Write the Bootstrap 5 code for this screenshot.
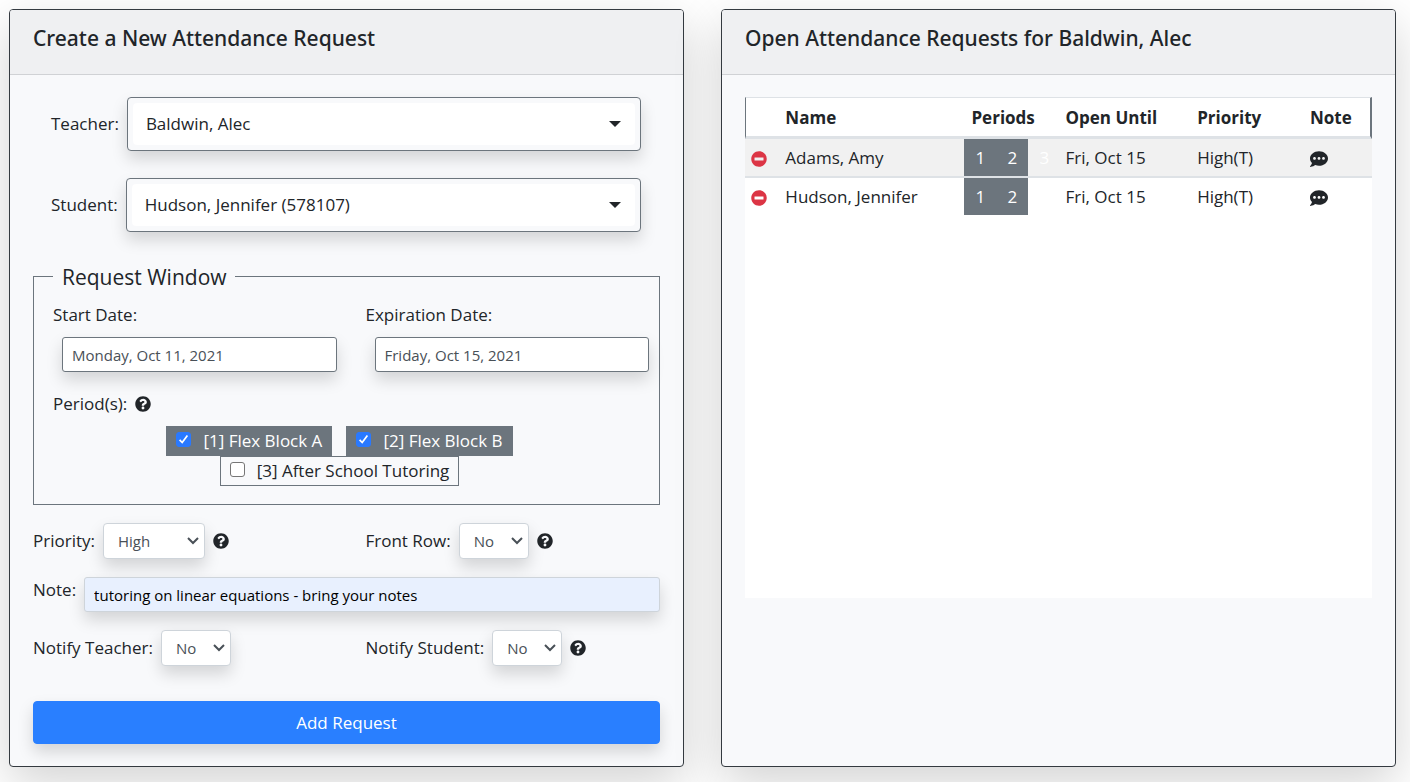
<!DOCTYPE html>
<html lang="en">
<head>
<meta charset="utf-8">
<meta name="viewport" content="width=device-width, initial-scale=1">
<title>Attendance Requests</title>
<link href="https://cdn.jsdelivr.net/npm/bootstrap@5.3.0/dist/css/bootstrap.min.css" rel="stylesheet">
<style>
  body { font-family: "Open Sans", "Noto Sans", sans-serif; font-size: 17px; line-height: 26px; color: #212529; background: #fff; }
  .page { display: grid; grid-template-columns: 1fr 1fr; gap: 37px; padding: 9px 14px 15px 9px; }
  .panel { --bs-card-bg: #f8f9fb; --bs-card-border-color: #343a40; --bs-card-border-radius: 4px; --bs-card-inner-border-radius: 3px; box-shadow: 0 16px 48px rgba(0,0,0,.175); }
  .panel > .card-header { padding: 12px 23px 20px; border-bottom: 1px solid #d0d2d5; background: #eff0f2; }
  .panel > .card-header h1 { font-family: "Noto Sans", "Open Sans", sans-serif; font-size: 21px; line-height: 32px; font-weight: 500; margin: 0; }
  .panel > .card-body { padding: 22px 23px; }
  .row { --bs-gutter-x: 38px; }
  .lift { box-shadow: 0 8px 16px rgba(0,0,0,.15); }
  .field { display: flex; align-items: center; gap: 8px; }
  .person { padding: 0 19px 0 18px; margin-bottom: 27px; }
  .picker { border: 1px solid #6c757d; border-radius: 4px; padding: 5px; background: #f8f9fb; }
  .picker select { width: 100%; height: 42px; border: 0; border-radius: 4px; padding: 0 13px; appearance: none; color: #212529;
    background: #fff url("data:image/svg+xml,%3Csvg xmlns='http://www.w3.org/2000/svg' width='12' height='6'%3E%3Cpath d='M0 0h12l-6 6z' fill='%23212529'/%3E%3C/svg%3E") no-repeat right 14px center; }
  .window { border: 1px solid #6c757d; margin: 0 0 18px; padding: 0 0 18px; }
  .window legend { float: none; width: auto; margin: 0 0 9px 19px; padding: 2px 8px 0 9px; font-size: 21px; line-height: 32px; }
  .window .row { --bs-gutter-x: 0; margin-bottom: 19px; }
  .window .row > div { padding: 0 10px 0 19px; }
  .window .row label { margin-bottom: 9px; }
  .periods { padding: 0 19px; }
  .periods .field { margin-bottom: 9px; }
  .textbox { display: block; height: 35px; border: 1px solid #6c757d; border-radius: 3px; padding: 0 9px; font-size: 15px; color: #495057; background: #fff; min-width: 0; }
  .window .textbox { margin-left: 9px; }
  .textbox.filled { border-color: #ced4da; background: #e8f0fe; color: #000; }
  .period { display: flex; align-items: center; gap: 12px; height: 30px; margin-right: 14px; padding: 0 9px; border: 1px solid #6c757d; }
  .period.on { background: #6c757d; color: #fff; }
  .period .form-check-input { width: 15px; height: 15px; margin: 0 0 4px; border: 1px solid #767676; border-radius: 3px; }
  .period .form-check-input:checked { background-color: #2979ff; border-color: #2979ff;
    background-image: url("data:image/svg+xml,%3Csvg xmlns='http://www.w3.org/2000/svg' viewBox='0 0 15 15'%3E%3Cpath d='M3 8l3 3 6-8' fill='none' stroke='%23fff' stroke-width='2'/%3E%3C/svg%3E"); }
  .choice { height: 36px; border: 1px solid #ced4da; border-radius: 4px; padding: 0 14px; font-size: 15px; color: #495057; appearance: none; width: 70px;
    background: #fff url("data:image/svg+xml,%3Csvg xmlns='http://www.w3.org/2000/svg' width='12' height='8'%3E%3Cpath d='M1 1l5 5 5-5' fill='none' stroke='%23495057' stroke-width='2'/%3E%3C/svg%3E") no-repeat right 5px center; }
  .choice.wide { width: 102px; }
  .memo { margin: 18px 0; }
  .glyph { border: 0; background: none; padding: 0; line-height: 0; color: #212529; }
  .glyph svg { display: block; fill: currentColor; }
  .glyph.remove { color: #dc3545; }
  .submit { --bs-btn-bg: #297fff; --bs-btn-border-color: #297fff; --bs-btn-border-radius: 4px; height: 43px; margin-top: 35px; padding: 0; font-size: 17px; }
  .listing { height: 501px; background: #fff; overflow: auto; }
  .requests { table-layout: fixed; width: 100%; margin: 0; border-collapse: separate; border-spacing: 0; }
  .requests th { height: 42px; padding: 2px 0 0 7px; border-top: 1px solid #dee2e6; border-bottom: 3px solid #dee2e6; line-height: 36px; }
  .requests th:first-child { border-left: 1px solid #6c757d; }
  .requests th:last-child { border-right: 2px solid #6c757d; }
  .requests td { height: 37px; padding: 0 0 0 7px; line-height: 37px; }
  .requests td:first-child { padding-left: 6px; }
  .requests th:nth-child(2), .requests td:nth-child(2) { padding-left: 9px; }
  .requests .glyph { vertical-align: middle; }
  .requests tbody tr:first-child td { background: #f1f1f1; border-bottom: 2px solid #dee2e6; }
  .requests td.slots { padding: 0; }
  .slot { flex: 0 0 32px; text-align: center; color: #fff; }
  .slot.on { background: #6c757d; }
</style>
</head>
<body>
<svg class="d-none" aria-hidden="true">
  <symbol id="help" viewBox="0 0 512 512"><path d="M504 256c0 136.997-111.043 248-248 248S8 392.997 8 256C8 119.083 119.043 8 256 8s248 111.083 248 248zM262.655 90c-54.497 0-89.255 22.957-116.549 63.758-3.536 5.286-2.353 12.415 2.715 16.258l34.699 26.31c5.205 3.947 12.621 3.008 16.665-2.122 17.864-22.658 30.113-35.797 57.303-35.797 20.429 0 45.698 13.148 45.698 32.958 0 14.976-12.363 22.667-32.534 33.976C247.128 238.528 216 254.941 216 296v4c0 6.627 5.373 12 12 12h56c6.627 0 12-5.373 12-12v-1.333c0-28.462 83.186-29.647 83.186-106.667 0-58.002-60.165-102-116.531-102zM256 338c-25.365 0-46 20.635-46 46 0 25.364 20.635 46 46 46s46-20.636 46-46c0-25.364-20.635-46-46-46z"/></symbol>
  <symbol id="minus" viewBox="0 0 512 512"><path d="M256 8C119 8 8 119 8 256s111 248 248 248 248-111 248-248S393 8 256 8zM124 304c-6.600 0-12-5.400-12-12v-72c0-6.600 5.400-12 12-12h264c6.600 0 12 5.400 12 12v72c0 6.600-5.400 12-12 12H124z"/></symbol>
  <symbol id="talk" viewBox="0 0 512 512"><path d="M256 32C114.600 32 0 125.100 0 240c0 49.600 21.400 95 57 130.700C44.500 421.100 2.700 466 2.200 466.500c-2.200 2.300-2.800 5.700-1.500 8.700S4.800 480 8 480c66.300 0 116-31.800 140.600-51.400 32.700 12.300 69 19.400 107.400 19.400 141.400 0 256-93.100 256-208S397.400 32 256 32zM128 280c-22 0-40-18-40-40s18-40 40-40 40 18 40 40-18 40-40 40zm128 0c-22 0-40-18-40-40s18-40 40-40 40 18 40 40-18 40-40 40zm128 0c-22 0-40-18-40-40s18-40 40-40 40 18 40 40-18 40-40 40z"/></symbol>
</svg>
<main class="page">
  <section class="card panel">
    <div class="card-header"><h1>Create a New Attendance Request</h1></div>
    <form class="card-body">
      <div class="field person">
        <label for="teacher">Teacher:</label>
        <div class="picker lift flex-grow-1"><select id="teacher"><option>Baldwin, Alec</option></select></div>
      </div>
      <div class="field person">
        <label for="student">Student:</label>
        <div class="picker lift flex-grow-1"><select id="student"><option>Hudson, Jennifer (578107)</option></select></div>
      </div>

      <fieldset class="window">
        <legend>Request Window</legend>
        <div class="row">
          <div class="col-6 d-flex flex-column">
            <label for="start">Start Date:</label>
            <input id="start" class="textbox lift" type="text" value="Monday, Oct 11, 2021">
          </div>
          <div class="col-6 d-flex flex-column">
            <label for="end">Expiration Date:</label>
            <input id="end" class="textbox lift" type="text" value="Friday, Oct 15, 2021">
          </div>
        </div>
        <div class="periods">
          <div class="field"><span>Period(s):</span><button type="button" class="glyph" aria-label="Help with periods"><svg width="16" height="16"><use href="#help"/></svg></button></div>
          <div class="d-flex flex-wrap justify-content-center">
            <label class="period on"><input class="form-check-input" type="checkbox" checked>[1] Flex Block A</label>
            <label class="period on"><input class="form-check-input" type="checkbox" checked>[2] Flex Block B</label>
            <label class="period"><input class="form-check-input" type="checkbox">[3] After School Tutoring</label>
          </div>
        </div>
      </fieldset>

      <div class="row">
        <div class="col-6 field">
          <label for="priority">Priority:</label>
          <select id="priority" class="choice wide lift"><option>High</option></select>
          <button type="button" class="glyph" aria-label="Help with priority"><svg width="16" height="16"><use href="#help"/></svg></button>
        </div>
        <div class="col-6 field">
          <label for="front">Front Row:</label>
          <select id="front" class="choice lift"><option>No</option></select>
          <button type="button" class="glyph" aria-label="Help with front row"><svg width="16" height="16"><use href="#help"/></svg></button>
        </div>
      </div>
      <div class="field memo">
        <label for="note" class="align-self-start">Note:</label>
        <input id="note" class="textbox filled lift flex-grow-1" type="text" value="tutoring on linear equations - bring your notes">
      </div>
      <div class="row">
        <div class="col-6 field">
          <label for="tell-teacher">Notify Teacher:</label>
          <select id="tell-teacher" class="choice lift"><option>No</option></select>
        </div>
        <div class="col-6 field">
          <label for="tell-student">Notify Student:</label>
          <select id="tell-student" class="choice lift"><option>No</option></select>
          <button type="button" class="glyph" aria-label="Help with notifying"><svg width="16" height="16"><use href="#help"/></svg></button>
        </div>
      </div>
      <button type="button" class="btn btn-primary submit lift w-100">Add Request</button>
    </form>
  </section>

  <section class="card panel">
    <div class="card-header"><h1>Open Attendance Requests for Baldwin, Alec</h1></div>
    <div class="card-body">
      <div class="listing">
        <table class="requests">
          <colgroup><col style="width:5%"><col style="width:30%"><col style="width:15%"><col style="width:21%"><col style="width:18%"><col></colgroup>
          <thead><tr><th></th><th>Name</th><th>Periods</th><th>Open Until</th><th>Priority</th><th>Note</th></tr></thead>
          <tbody>
            <tr>
              <td><button type="button" class="glyph remove" aria-label="Remove Adams, Amy"><svg width="16" height="16"><use href="#minus"/></svg></button></td>
              <td>Adams, Amy</td>
              <td class="slots"><div class="d-flex"><span class="slot on">1</span><span class="slot on">2</span><span class="slot">3</span></div></td>
              <td>Fri, Oct 15</td><td>High(T)</td>
              <td><button type="button" class="glyph" aria-label="Show note"><svg width="18" height="18"><use href="#talk"/></svg></button></td>
            </tr>
            <tr>
              <td><button type="button" class="glyph remove" aria-label="Remove Hudson, Jennifer"><svg width="16" height="16"><use href="#minus"/></svg></button></td>
              <td>Hudson, Jennifer</td>
              <td class="slots"><div class="d-flex"><span class="slot on">1</span><span class="slot on">2</span></div></td>
              <td>Fri, Oct 15</td><td>High(T)</td>
              <td><button type="button" class="glyph" aria-label="Show note"><svg width="18" height="18"><use href="#talk"/></svg></button></td>
            </tr>
          </tbody>
        </table>
      </div>
    </div>
  </section>
</main>
<script src="https://cdn.jsdelivr.net/npm/bootstrap@5.3.0/dist/js/bootstrap.bundle.min.js"></script>
</body>
</html>
